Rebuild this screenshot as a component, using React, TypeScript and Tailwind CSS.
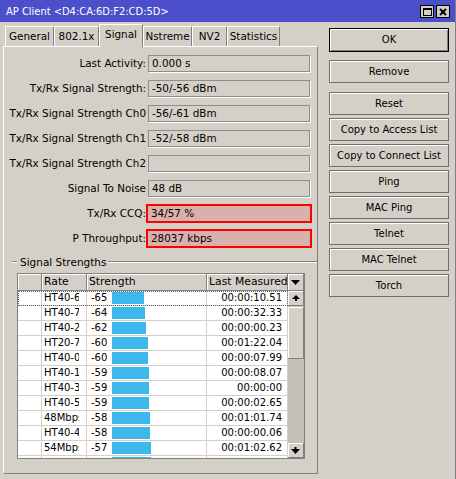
import React from 'react';

type Row = [string, string, string, number];

const rows: Row[] = [
  ['HT40-6', '-65', '00:00:10.51', 32],
  ['HT40-7', '-64', '00:00:32.33', 33],
  ['HT40-2', '-62', '00:00:00.23', 34],
  ['HT20-7', '-60', '00:01:22.04', 36],
  ['HT40-0', '-60', '00:00:07.99', 36],
  ['HT40-1', '-59', '00:00:08.07', 37],
  ['HT40-3', '-59', '00:00:00', 37],
  ['HT40-5', '-59', '00:00:02.65', 37],
  ['48Mbps', '-58', '00:01:01.74', 38],
  ['HT40-4', '-58', '00:00:00.06', 38],
  ['54Mbps', '-57', '00:01:02.62', 39],
  ['', '', '', 39],
];

const fields: { label: string; value: string; red?: boolean }[] = [
  { label: 'Last Activity:', value: '0.000 s' },
  { label: 'Tx/Rx Signal Strength:', value: '-50/-56 dBm' },
  { label: 'Tx/Rx Signal Strength Ch0', value: '-56/-61 dBm' },
  { label: 'Tx/Rx Signal Strength Ch1', value: '-52/-58 dBm' },
  { label: 'Tx/Rx Signal Strength Ch2', value: '' },
  { label: 'Signal To Noise', value: '48 dB' },
  { label: 'Tx/Rx CCQ:', value: '34/57 %', red: true },
  { label: 'P Throughput:', value: '28037 kbps', red: true },
];

const tabs: { name: string; w: string; sel?: boolean }[] = [
  { name: 'General', w: 'w-[49px]' },
  { name: '802.1x', w: 'w-[45px]' },
  { name: 'Signal', w: 'w-[44px]', sel: true },
  { name: 'Nstreme', w: 'w-[49px]' },
  { name: 'NV2', w: 'w-[35px]' },
  { name: 'Statistics', w: 'w-[53px]' },
];

function Btn({ label, h = 'h-[23px]', def = false }: { label: string; h?: string; def?: boolean }) {
  if (def) {
    return (
      <div className={`${h} w-full border border-black flex`}>
        <div className="flex-1 flex items-center justify-center shadow-[inset_1px_1px_0_#ffffff,inset_-1px_-1px_0_#808080]">
          {label}
        </div>
      </div>
    );
  }
  return (
    <div className={`${h} w-full border border-[#6e6e6e] flex items-center justify-center shadow-[inset_1px_1px_0_#ffffff]`}>
      {label}
    </div>
  );
}

function UpArrow() {
  return (
    <svg width="8" height="7" viewBox="0 0 8 7">
      <polygon points="4,0 8,4 0,4" fill="#000" />
      <rect x="3" y="4" width="2" height="2" fill="#000" />
    </svg>
  );
}

function DownArrow({ stem = true }: { stem?: boolean }) {
  return (
    <svg width="9" height="7" viewBox="0 0 9 7">
      {stem && <rect x="3.5" y="0" width="2" height="2" fill="#000" />}
      <polygon points={stem ? '0,2 9,2 4.5,7' : '0,1 9,1 4.5,6'} fill="#000" />
    </svg>
  );
}

export default function App() {
  return (
    <div className="w-[456px] h-[479px] bg-[#d4d0c8] text-[10px] text-black leading-none [font-family:'DejaVu_Sans',sans-serif] flex flex-col overflow-hidden border-r border-[#808080]">
      {/* Title bar */}
      <div className="h-[22px] shrink-0 bg-[#4b4fc9] flex items-center pl-[6px] pr-[5px] text-white text-[11px] [font-family:'DejaVu_Sans_Condensed','DejaVu_Sans',sans-serif] [font-stretch:semi-condensed]">
        <span className="flex-1 whitespace-nowrap">AP Client &lt;D4:CA:6D:F2:CD:5D&gt;</span>
        <div className="flex gap-[2px] mt-[1px]">
          <div className="w-[14px] h-[13px] bg-[#d4d0c8] border border-black flex items-center justify-center">
            <svg width="9" height="8" viewBox="0 0 9 8">
              <rect x="0.5" y="0.5" width="8" height="7" fill="none" stroke="#000" />
              <rect x="0" y="0" width="9" height="2" fill="#000" />
            </svg>
          </div>
          <div className="w-[14px] h-[13px] bg-[#d4d0c8] border border-black flex items-center justify-center">
            <svg width="8" height="8" viewBox="0 0 8 8">
              <path d="M1 1 L7 7 M7 1 L1 7" stroke="#000" strokeWidth="2" />
            </svg>
          </div>
        </div>
      </div>

      <div className="flex flex-1">
        {/* Left column */}
        <div className="ml-[3px] w-[315px] flex flex-col pt-[2px]">
          {/* Tabs */}
          <div className="h-[22px] flex items-end pl-[2px] relative z-10 text-[10.4px]">
            {tabs.map((t) =>
              t.sel ? (
                <div
                  key={t.name}
                  className={`${t.w} h-[23px] -mb-[1px] bg-[#d4d0c8] border-l border-t border-white border-r border-r-[#808080] flex items-center justify-center pb-[3px]`}
                >
                  {t.name}
                </div>
              ) : (
                <div
                  key={t.name}
                  className={`${t.w} h-[20px] bg-[#d4d0c8] border-l border-t border-white border-r border-r-[#808080] flex items-center justify-center`}
                >
                  {t.name}
                </div>
              )
            )}
          </div>

          {/* Panel */}
          <div className="h-[428px] border-t border-l border-white border-r border-b border-r-[#808080] border-b-[#808080] flex flex-col pt-[4px]">
            {fields.map((f) => (
              <div key={f.label} className="h-[25px] flex items-center text-[10.4px]">
                <div className="w-[142px] text-right whitespace-nowrap">{f.label}</div>
                {f.red ? (
                  <div className="w-[166px] h-[19px] border-2 border-[#ff0000] bg-[#d9b0ac] flex items-center pl-[3px]">
                    {f.value}
                  </div>
                ) : (
                  <div className="ml-[2px] w-[162px] h-[17px] border border-[#8d8d8d] shadow-[1px_1px_0_#ffffff] flex items-center pl-[3px]">
                    {f.value}
                  </div>
                )}
              </div>
            ))}

            {/* Group box title */}
            <div className="h-[22px] flex items-center">
              <div className="ml-[8px] w-[5px] h-[2px] border-t border-[#808080] border-b border-b-white" />
              <span className="ml-[3px] text-[10.5px] whitespace-nowrap">Signal Strengths</span>
              <div className="ml-[2px] flex-1 h-[2px] border-t border-[#808080] border-b border-b-white" />
            </div>

            {/* Table */}
            <div className="ml-[13px] w-[288px] h-[186px] border border-[#808080] flex bg-white">
              <div className="w-[270px] flex flex-col overflow-hidden">
                {/* Header */}
                <div className="h-[17px] shrink-0 flex bg-[#d4d0c8] text-[10.8px]">
                  <div className="w-[24px] h-full border-r border-b border-[#808080] shadow-[inset_1px_1px_0_#ffffff]" />
                  <div className="w-[45px] h-full border-r border-b border-[#808080] shadow-[inset_1px_1px_0_#ffffff] flex items-center pl-[2px]">
                    Rate
                  </div>
                  <div className="w-[120px] h-full border-r border-b border-[#808080] shadow-[inset_1px_1px_0_#ffffff] flex items-center pl-[2px]">
                    Strength
                  </div>
                  <div className="w-[81px] h-full border-r border-b border-[#808080] shadow-[inset_1px_1px_0_#ffffff] flex items-center pl-[2px] overflow-hidden whitespace-nowrap">
                    Last Measured
                  </div>
                </div>
                {/* Rows */}
                {rows.map((r, i) => (
                  <div
                    key={i}
                    className={`h-[15px] shrink-0 flex ${i === 0 ? 'outline-1 outline-dotted outline-[#666] -outline-offset-1' : ''}`}
                  >
                    <div className="w-[24px] h-full border-r border-b border-[#d4d0c8]" />
                    <div className="w-[45px] h-full border-r border-b border-[#d4d0c8] flex items-center pl-[2px]">
                      <span className="w-[35px] overflow-hidden whitespace-nowrap">{r[0]}</span>
                    </div>
                    <div className="w-[120px] h-full border-r border-b border-[#d4d0c8] flex items-start pl-[4px]">
                      <span className="w-[21px] h-full flex items-center">{r[1]}</span>
                      <div className="h-[12px] mt-[1px] bg-[#3cb8ec]" style={{ width: `${r[3]}px` }} />
                    </div>
                    <div className="w-[81px] h-full border-r border-b border-[#d4d0c8] flex items-center justify-end pr-[5px] whitespace-nowrap">
                      {r[2]}
                    </div>
                  </div>
                ))}
              </div>

              {/* Scrollbar */}
              <div className="w-[16px] flex flex-col bg-[#c4c0b9]">
                <div className="h-[17px] shrink-0 bg-[#d4d0c8] border-r border-b border-[#808080] shadow-[inset_1px_1px_0_#ffffff] flex items-center justify-center">
                  <DownArrow stem={false} />
                </div>
                <div className="h-[15px] shrink-0 bg-[#d4d0c8] border-r border-b border-[#808080] shadow-[inset_1px_1px_0_#ffffff] flex items-center justify-center">
                  <UpArrow />
                </div>
                <div className="flex-1 flex flex-col">
                  <div className="h-[52px] mt-[1px] bg-[#d4d0c8] border-r border-b border-[#808080] shadow-[inset_1px_1px_0_#ffffff]" />
                </div>
                <div className="h-[15px] shrink-0 bg-[#d4d0c8] border-r border-b border-[#808080] shadow-[inset_1px_1px_0_#ffffff] flex items-center justify-center">
                  <DownArrow />
                </div>
              </div>
            </div>
          </div>
        </div>

        {/* Right column */}
        <div className="ml-[11px] w-[120px] pt-[6px] flex flex-col">
          <Btn label="OK" h="h-[24px]" def />
          <div className="mt-[8px]">
            <Btn label="Remove" />
          </div>
          <div className="mt-[9px] flex flex-col gap-[3px]">
            <Btn label="Reset" />
            <Btn label="Copy to Access List" />
            <Btn label="Copy to Connect List" />
            <Btn label="Ping" />
            <Btn label="MAC Ping" />
            <Btn label="Telnet" />
            <Btn label="MAC Telnet" />
            <Btn label="Torch" />
          </div>
        </div>
      </div>
    </div>
  );
}
